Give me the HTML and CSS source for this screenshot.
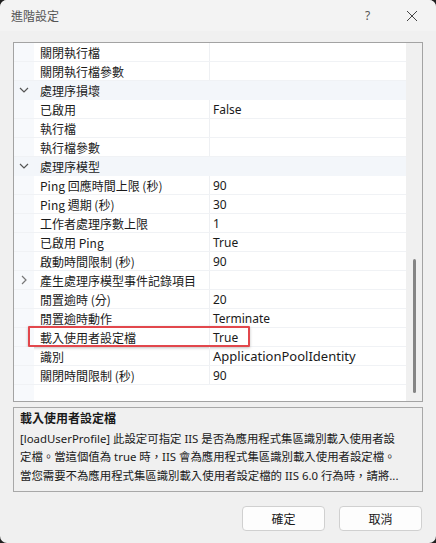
FILE: index.html
```html
<!DOCTYPE html>
<html lang="zh-Hant">
<head>
<meta charset="utf-8">
<link rel="stylesheet" href="styles.css">
</head>
<body>
<div class="window">
  <div class="titlebar">
    <span class="title">進階設定</span>
    <span class="help">?</span>
    <svg class="close" width="12" height="12" viewBox="0 0 12 12"><path d="M1 1L11 11M11 1L1 11" stroke="#444" stroke-width="1"/></svg>
  </div>
  <div class="content">
    <div class="grid">
      <div class="rows">
        <div class="row"><span class="gut"></span><span class="name">關閉執行檔</span><span class="val"></span></div>
        <div class="row"><span class="gut"></span><span class="name">關閉執行檔參數</span><span class="val"></span></div>
        <div class="row cat"><span class="gut"><svg width="10" height="6" viewBox="0 0 10 6"><path d="M1 1L5 5L9 1" fill="none" stroke="#555" stroke-width="1.2"/></svg></span><span class="name">處理序損壞</span></div>
        <div class="row"><span class="gut"></span><span class="name">已啟用</span><span class="val">False</span></div>
        <div class="row"><span class="gut"></span><span class="name">執行檔</span><span class="val"></span></div>
        <div class="row"><span class="gut"></span><span class="name">執行檔參數</span><span class="val"></span></div>
        <div class="row cat"><span class="gut"><svg width="10" height="6" viewBox="0 0 10 6"><path d="M1 1L5 5L9 1" fill="none" stroke="#555" stroke-width="1.2"/></svg></span><span class="name">處理序模型</span></div>
        <div class="row"><span class="gut"></span><span class="name">Ping 回應時間上限 (秒)</span><span class="val">90</span></div>
        <div class="row"><span class="gut"></span><span class="name">Ping 週期 (秒)</span><span class="val">30</span></div>
        <div class="row"><span class="gut"></span><span class="name">工作者處理序數上限</span><span class="val">1</span></div>
        <div class="row"><span class="gut"></span><span class="name">已啟用 Ping</span><span class="val">True</span></div>
        <div class="row"><span class="gut"></span><span class="name">啟動時間限制 (秒)</span><span class="val">90</span></div>
        <div class="row"><span class="gut"><svg width="6" height="10" viewBox="0 0 6 10"><path d="M1 1L5 5L1 9" fill="none" stroke="#777" stroke-width="1.2"/></svg></span><span class="name">產生處理序模型事件記錄項目</span><span class="val"></span></div>
        <div class="row"><span class="gut"></span><span class="name">閒置逾時 (分)</span><span class="val">20</span></div>
        <div class="row"><span class="gut"></span><span class="name">閒置逾時動作</span><span class="val">Terminate</span></div>
        <div class="row hl"><span class="gut"></span><span class="name">載入使用者設定檔</span><span class="val">True</span><span class="mark"></span></div>
        <div class="row"><span class="gut"></span><span class="name">識別</span><span class="val big">ApplicationPoolIdentity</span></div>
        <div class="row"><span class="gut"></span><span class="name">關閉時間限制 (秒)</span><span class="val">90</span></div>
      </div>
      <div class="scrollbar"><div class="thumb"></div></div>
    </div>
    <div class="desc">
      <div class="desc-title">載入使用者設定檔</div>
      <div class="desc-text">[loadUserProfile] 此設定可指定 IIS 是否為應用程式集區識別載入使用者設<br>定檔。當這個值為 true 時，IIS 會為應用程式集區識別載入使用者設定檔。<br>當您需要不為應用程式集區識別載入使用者設定檔的 IIS 6.0 行為時，請將...</div>
    </div>
    <div class="buttons">
      <button class="btn">確定</button>
      <button class="btn">取消</button>
    </div>
  </div>
</div>
</body>
</html>
```
FILE: styles.css
```css
html, body {
  margin: 0;
  padding: 0;
  background: #202020;
}
.window {
  width: 436px;
  height: 543px;
  background: #f0f0f0;
  border-radius: 7px;
  overflow: hidden;
  font-family: "Segoe UI", "Noto Sans", "Noto Sans CJK TC", sans-serif;
  font-size: 12px;
  color: #1a1a1a;
  display: flex;
  flex-direction: column;
}
.titlebar {
  height: 31px;
  background: #f3f3f3;
  display: flex;
  align-items: center;
  padding: 0 0 0 11px;
  flex-shrink: 0;
}
.title {
  font-family: "Noto Sans CJK TC", sans-serif;
  font-size: 12px;
  color: #555;
  flex: 1;
}
.help {
  font-family: "Noto Sans", sans-serif;
  font-size: 12px;
  color: #555;
  width: 12px;
  margin-right: 29px;
}
.close {
  margin-right: 18px;
}
.content {
  flex: 1;
  padding: 11px 13px 0 13px;
  display: flex;
  flex-direction: column;
}
.grid {
  height: 358px;
  border: 1px solid #a3a3a3;
  background: #fff;
  display: flex;
}
.rows {
  flex: 1;
  display: flex;
  flex-direction: column;
  background: linear-gradient(to right, #f7f9fc 0 20px, #fff 20px);
}
.row {
  height: 19px;
  display: flex;
  align-items: center;
  position: relative;
  box-sizing: border-box;
  border-bottom: 1px solid #f0f2f5;
  font-family: "Noto Sans CJK TC", sans-serif;
  font-size: 12px;
}
.gut {
  width: 20px;
  align-self: stretch;
  background: #f7f9fc;
  display: flex;
  align-items: center;
  justify-content: center;
  flex-shrink: 0;
}
.name {
  box-sizing: border-box;
  width: 176px;
  padding-left: 6px;
  align-self: stretch;
  display: flex;
  align-items: center;
  border-right: 1px solid #eef0f3;
  flex-shrink: 0;
  white-space: nowrap;
  color: #1a1a1a;
}
.val {
  padding-left: 3px;
  font-family: "Noto Sans", "Noto Sans CJK TC", sans-serif;
  font-size: 12px;
  color: #1a1a1a;
  white-space: nowrap;
}
.val.big {
  font-size: 13px;
}
.cat {
  background: #f3f6fa;
  border-bottom-color: #f3f6fa;
}
.cat .gut {
  background: #f3f6fa;
}
.cat .name {
  border-right: none;
  color: #1a1a1a;
}
.mark {
  position: absolute;
  left: 14px;
  top: -2px;
  width: 218px;
  height: 17px;
  border: 2px solid #e2474c;
  border-radius: 1px;
  box-shadow: 0 1px 3px rgba(0, 0, 0, 0.25);
}
.scrollbar {
  width: 16px;
  background: #f0f0f0;
  position: relative;
  flex-shrink: 0;
}
.thumb {
  position: absolute;
  left: 7px;
  top: 216px;
  width: 3px;
  height: 134px;
  background: #858585;
  border-radius: 2px;
}
.desc {
  margin-top: 5px;
  height: 81px;
  border: 1px solid #a8a8a8;
  padding: 1px 6px;
  font-family: "Noto Sans", "Noto Sans CJK TC", sans-serif;
  font-size: 12px;
  line-height: 18.5px;
  color: #1a1a1a;
}
.desc-title {
  font-family: "Noto Sans CJK TC", sans-serif;
  font-weight: bold;
}
.desc-text {
  white-space: nowrap;
  margin-top: 2px;
  font-size: 11.4px;
}
.buttons {
  display: flex;
  justify-content: flex-end;
  gap: 14px;
  margin-top: 14px;
  padding-right: 1px;
}
.btn {
  width: 83px;
  height: 25px;
  background: #fdfdfd;
  border: 1px solid #d0d0d0;
  border-radius: 4px;
  font-family: "Noto Sans CJK TC", sans-serif;
  font-size: 12px;
  color: #1a1a1a;
  padding: 0;
}
```
